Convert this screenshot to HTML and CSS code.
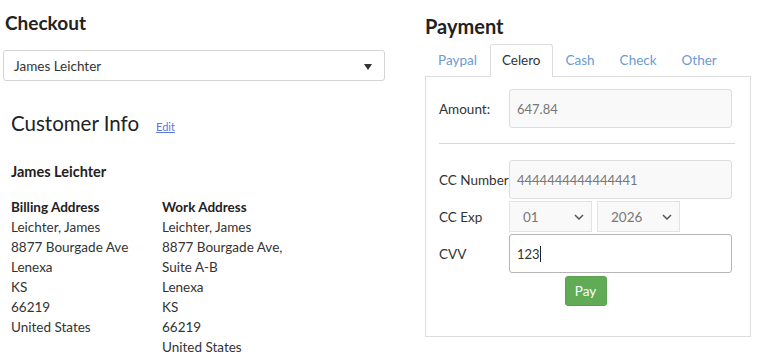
FILE: index.html
```html
<!DOCTYPE html>
<html>
<head>
<meta charset="utf-8">
<link rel="stylesheet" href="styles.css">
</head>
<body>
<div class="page">
  <div class="left">
    <h2 class="title checkout">Checkout</h2>
    <div class="select-main">
      <span>James Leichter</span>
      <svg class="caret" width="8" height="6" viewBox="0 0 8 6"><polygon points="0,0 8,0 4,6" fill="#333"/></svg>
    </div>
    <div class="cust-head">
      <h2 class="cust-title">Customer Info</h2>
      <a class="edit" href="#">Edit</a>
    </div>
    <div class="cust-name">James Leichter</div>
    <div class="addresses">
      <div class="addr">
        <div class="addr-head">Billing Address</div>
        <div>Leichter, James</div>
        <div>8877 Bourgade Ave</div>
        <div>Lenexa</div>
        <div>KS</div>
        <div>66219</div>
        <div>United States</div>
      </div>
      <div class="addr">
        <div class="addr-head">Work Address</div>
        <div>Leichter, James</div>
        <div>8877 Bourgade Ave,</div>
        <div>Suite A-B</div>
        <div>Lenexa</div>
        <div>KS</div>
        <div>66219</div>
        <div>United States</div>
      </div>
    </div>
  </div>
  <div class="right">
    <h2 class="title payment">Payment</h2>
    <div class="tabs">
      <div class="tab">Paypal</div>
      <div class="tab active">Celero</div>
      <div class="tab">Cash</div>
      <div class="tab">Check</div>
      <div class="tab">Other</div>
    </div>
    <div class="panel">
      <div class="row">
        <div class="label">Amount:</div>
        <div class="field readonly">647.84</div>
      </div>
      <div class="divider"></div>
      <div class="row">
        <div class="label">CC Number</div>
        <div class="field readonly">4444444444444441</div>
      </div>
      <div class="row gap">
        <div class="label">CC Exp</div>
        <div class="selects">
          <div class="sel sel-month"><span>01</span><svg width="10" height="6" viewBox="0 0 10 6"><polyline points="1,1 5,5 9,1" fill="none" stroke="#555" stroke-width="1.5"/></svg></div>
          <div class="sel sel-year"><span>2026</span><svg width="10" height="6" viewBox="0 0 10 6"><polyline points="1,1 5,5 9,1" fill="none" stroke="#555" stroke-width="1.5"/></svg></div>
        </div>
      </div>
      <div class="row gap">
        <div class="label">CVV</div>
        <div class="field active-field">123<span class="cursor"></span></div>
      </div>
      <div class="btn-row">
        <div class="pay">Pay</div>
      </div>
    </div>
  </div>
</div>
</body>
</html>
```
FILE: styles.css
```css
* { box-sizing: border-box; }
body {
  margin: 0;
  font-family: "Lato", "Noto Sans", sans-serif;
  font-size: 13px;
  color: #333;
  background: #fff;
}
.page {
  display: flex;
  align-items: flex-start;
}
.left {
  width: 382px;
  margin-left: 3px;
}
.title {
  margin: 0;
  font-size: 20px;
  font-weight: 700;
  line-height: 24px;
  color: #222;
}
.checkout {
  margin-top: 11px;
  padding-left: 2px;
  font-size: 19px;
}
.select-main {
  margin-top: 15px;
  height: 31px;
  border: 1px solid #d4d4d4;
  border-radius: 3px;
  display: flex;
  align-items: center;
  justify-content: space-between;
  padding: 0 12px 0 10px;
  font-size: 13.5px;
}
.caret { margin-top: 2px; }
.cust-head {
  margin-top: 28px;
  padding-left: 8px;
  display: flex;
  align-items: baseline;
  height: 28px;
}
.cust-title {
  margin: 0;
  font-size: 20.5px;
  font-weight: 400;
  line-height: 28px;
  color: #222;
}
.edit {
  margin-left: 17px;
  font-size: 11px;
  color: #5a78e0;
}
.cust-name {
  margin-top: 25px;
  padding-left: 8px;
  font-weight: 700;
  font-size: 14.5px;
  line-height: 20px;
  color: #222;
}
.addresses {
  margin-top: 15px;
  padding-left: 8px;
  display: flex;
  line-height: 20px;
  font-size: 13.5px;
}
.addr { width: 151px; }
.addr-head { font-weight: 700; color: #222; }

.right {
  margin-left: 40px;
  width: 326px;
}
.payment { margin-top: 14px; }
.tabs {
  margin-top: 6px;
  display: flex;
  padding-left: 1px;
  height: 32px;
}
.tab {
  padding: 0 11px;
  margin-right: 1px;
  line-height: 31px;
  font-size: 13.5px;
  color: #6b9ad6;
  border: 1px solid transparent;
  border-bottom: none;
  border-radius: 3px 3px 0 0;
}
.tab.active {
  color: #333;
  border-color: #ddd;
  background: #fff;
  height: 33px;
}
.panel {
  border: 1px solid #ddd;
  padding: 12px 18px 30px 13px;
  height: 261px;
}
.row {
  display: flex;
  align-items: center;
}
.row.gap { margin-top: 2px; }
.label {
  width: 70px;
  font-size: 13.5px;
  white-space: nowrap;
}
.field {
  width: 223px;
  height: 39px;
  border: 1px solid #ddd;
  border-radius: 3px;
  display: flex;
  align-items: center;
  padding: 0 7px;
  font-size: 13px;
}
.readonly {
  background: #f9f9f9;
  color: #777;
}
.active-field {
  background: #fff;
  border-color: #b5b5b5;
  color: #333;
}
.cursor {
  display: inline-block;
  width: 1px;
  height: 16px;
  background: #222;
}
.divider {
  height: 1px;
  background: #d8d8d8;
  margin: 15px -3px 16px 0;
}
.selects {
  display: flex;
  gap: 5px;
}
.sel {
  width: 83px;
  height: 31px;
  border: 1px solid #e3e3e3;
  background: #f9f9f9;
  display: flex;
  align-items: center;
  justify-content: space-between;
  padding: 0 7px 0 13px;
  color: #777;
  font-size: 13.5px;
}
.btn-row {
  margin-top: 3px;
  display: flex;
  justify-content: center;
}
.pay {
  width: 42px;
  height: 30px;
  background: #62ab56;
  border: 1px solid #5aa04e;
  border-radius: 3px;
  color: #fff;
  font-size: 13.5px;
  display: flex;
  align-items: center;
  justify-content: center;
}
```
